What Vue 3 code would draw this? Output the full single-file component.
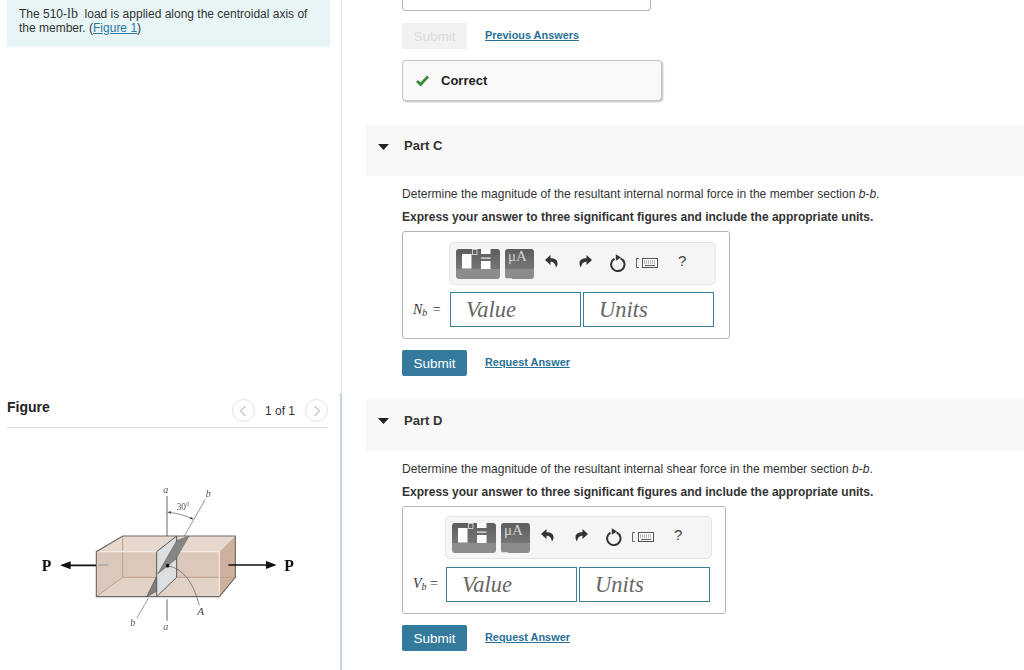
<script setup>
const parts = [
  { name: 'Part C', kind: 'normal', sym: 'N', variant: 'c' },
  { name: 'Part D', kind: 'shear', sym: 'V', variant: 'd' }
]
</script>

<template>
  <div class="page">
    <aside class="left">
      <div class="info">
        The 510-<span class="serif">lb</span>&nbsp; load is applied along the centroidal axis of the member. (<a class="fig-link">Figure 1</a>)
      </div>
      <div class="fig-head">
        <span class="fig-title">Figure</span>
        <div class="pager">
          <span class="circle"><svg width="8" height="12" viewBox="0 0 8 12"><path d="M6.500 1 1.500 6l5 5" fill="none" stroke="#c4c4c4" stroke-width="1.100"/></svg></span>
          <span class="count">1 of 1</span>
          <span class="circle"><svg width="8" height="12" viewBox="0 0 8 12"><path d="M1.500 1l5 5-5 5" fill="none" stroke="#c4c4c4" stroke-width="1.100"/></svg></span>
        </div>
      </div>
      <svg class="diagram" width="340" height="200" viewBox="0 0 1020 600">
        <path d="M501 78V206M501 388V452" stroke="#8c8c8c" stroke-width="4" fill="none"/>
        <path d="M616 88 552 200M445 385 410 445" stroke="#9a9a9a" stroke-width="3" fill="none"/>
        <path d="M503 127Q545 130 580 148" stroke="#555" stroke-width="2" fill="none"/>
        <path d="M503 127l10-4v8zM580 148l-11-1 4-7z" fill="#444"/>
        <path d="M289 245 368 198H706L658 245z" fill="#e6d8cc"/>
        <path d="M289 245H658V380H289z" fill="#dbc8ba"/>
        <path d="M658 245 706 198V322L658 380z" fill="#cdb19c"/>
        <path d="M289 380 368 322H658V380z" fill="#e3d3c7"/>
        <path d="M368 198V322M368 322H706M368 322 289 380" stroke="#bda28e" stroke-width="3" fill="none"/>
        <path d="M289 245H658M658 245V380" stroke="#f2ebe5" stroke-width="3.500" fill="none"/>
        <path d="M289 380V245L368 198H706V322L658 380H289z" stroke="#6f6a66" stroke-width="3.500" fill="none"/>
        <path d="M295 285H325" stroke="#a6a3a6" stroke-width="4"/>
        <path d="M470 318 440 380 470 364z" fill="#7d7d7d" stroke="#444" stroke-width="1.500"/>
        <path d="M470 245 530 198V322L470 380z" fill="#dcdee0" stroke="#55585a" stroke-width="3"/>
        <path d="M567 198 530 212 473 312 527 268z" fill="#858585" stroke="#555" stroke-width="1.500"/>
        <circle cx="503" cy="287" r="5.500" fill="#111"/>
        <path d="M506 288Q570 300 598 406" stroke="#555" stroke-width="2" fill="none"/>
        <path d="M288 286H205M685 285H805" stroke="#111" stroke-width="5" fill="none"/>
        <path d="M180 286 212 274V298zM830 285 798 273V297z" fill="#111"/>
        <text x="125" y="302" class="p">P</text>
        <text x="853" y="302" class="p">P</text>
        <text x="490" y="70" class="it">a</text>
        <text x="490" y="481" class="it">a</text>
        <text x="617" y="80" class="it">b</text>
        <text x="391" y="467" class="it">b</text>
        <text x="592" y="436" class="it big">A</text>
        <text x="530" y="121" class="deg">30°</text>
      </svg>
    </aside>

    <main class="right">
      <div class="prev-box"></div>
      <div class="actions first">
        <button class="submit disabled">Submit</button>
        <a class="link">Previous Answers</a>
      </div>
      <div class="correct">
        <svg width="13" height="11" viewBox="0 0 13 11"><path d="M1 6 4.600 9.500 12 1.500" fill="none" stroke="#3a8a3c" stroke-width="2.800"/></svg>
        <span>Correct</span>
      </div>

      <section v-for="p in parts" :key="p.name" class="part" :class="p.variant">
        <header class="band">
          <svg class="caret" width="11" height="6" viewBox="0 0 11 6"><path d="M0 0H11L5.500 6z" fill="#222"/></svg>
          <span>{{ p.name }}</span>
        </header>
        <p class="q">Determine the magnitude of the resultant internal {{ p.kind }} force in the member section <i>b</i>-<i>b</i>.</p>
        <p class="hint">Express your answer to three significant figures and include the appropriate units.</p>
        <div class="answer">
          <div class="toolbar">
            <span class="tbtn t1">
              <svg width="44" height="21" viewBox="0 0 44 21">
                <rect x="6" y="5" width="9.500" height="14.500" fill="#fff"/>
                <rect x="16.500" y=".5" width="4.500" height="5" fill="none" stroke="#ccc" stroke-width="1"/>
                <rect x="25" y="0" width="9.500" height="5" fill="#fff"/>
                <rect x="25" y="8.500" width="9.500" height="1.200" fill="#eee"/>
                <rect x="25" y="12" width="9.500" height="8" fill="#fff"/>
              </svg>
            </span>
            <span class="tbtn t2"><span class="mu">μA</span><i class="dash"></i></span>
            <svg class="ic undo" width="13" height="13" viewBox="0 0 13 13"><path d="M5.500 0 0 5l5.500 5V6.800c3 0 4.500 1.500 5.500 5.700.9-1 1.500-2.600 1.500-4.200C12.500 4.800 10 3.300 5.500 3.200z" fill="#333"/></svg>
            <svg class="ic redo" width="13" height="13" viewBox="0 0 13 13"><path d="M7.500 0 13 5l-5.500 5V6.800c-3 0-4.500 1.500-5.500 5.700-.9-1-1.500-2.600-1.500-4.200C.5 4.800 3 3.300 7.500 3.200z" fill="#333"/></svg>
            <svg class="ic reset" width="16" height="18" viewBox="0 0 16 18"><path d="M4.500 4.600a6.700 6.700 0 1 0 6 -.3" fill="none" stroke="#333" stroke-width="2"/><path d="M5.800 .3 11 3.600 5.800 6.800z" fill="#333"/></svg>
            <svg class="ic kbd" width="22" height="10" viewBox="0 0 22 10">
              <path d="M3 .5H.5v9H3" fill="none" stroke="#666"/>
              <rect x="6.500" y=".5" width="15" height="9" fill="#fff" stroke="#555"/>
              <path d="M8 3h12M8 5h12" stroke="#777" stroke-dasharray="1 1" stroke-width="1.200"/>
              <path d="M9 7.500h10" stroke="#666" stroke-width="1.200"/>
            </svg>
            <span class="help">?</span>
          </div>
          <label class="sym"><i>{{ p.sym }}<sub>b</sub></i> =</label>
          <div class="inputs">
            <span class="field">Value</span>
            <span class="field">Units</span>
          </div>
        </div>
        <div class="actions">
          <button class="submit">Submit</button>
          <a class="link">Request Answer</a>
        </div>
      </section>
    </main>
  </div>
</template>

<style>
html, body { margin: 0; background: #fff; }
</style>

<style scoped>
.page {
  display: grid;
  grid-template-columns: 342px 1fr;
  width: 1024px;
  height: 670px;
  overflow: hidden;
  font-family: "Liberation Sans", Arial, sans-serif;
  color: #2b2b2b;
}
.left {
  box-sizing: border-box;
  background:
    linear-gradient(#dde6ed, #dde6ed) right top / 1px 393px no-repeat,
    linear-gradient(#c2d4e3, #c2d4e3) right bottom / 2px 277px no-repeat;
}
.info {
  margin-left: 7px;
  width: 323px;
  height: 47px;
  box-sizing: border-box;
  padding: 7px 12px 0;
  background: #e7f5f6;
  font-size: 12px;
  line-height: 14px;
  color: #333;
}
.serif { font-family: "Liberation Serif", serif; font-size: 14px; line-height: 1; }
.fig-link { color: #2a7a9e; text-decoration: underline; }
.fig-head {
  margin: 351px 0 0 7px;
  width: 321px;
  height: 30px;
  box-sizing: border-box;
  border-bottom: 1px solid #dedede;
  display: flex;
  justify-content: space-between;
  padding-bottom: 5px;
  align-items: center;
}
.fig-title { font-size: 14px; line-height: 16px; font-weight: 700; color: #222; align-self: flex-start; margin-top: 1px; }
.pager { display: flex; align-items: center; gap: 10px; font-size: 12px; color: #333; margin-top: 1px; }
.circle {
  width: 23px; height: 23px; box-sizing: border-box;
  border: 1px solid #e2e2e2; border-radius: 50%;
  display: flex; align-items: center; justify-content: center;
}
.diagram { display: block; margin-top: 42px; filter: blur(0.6px); }
.p { font: 700 47px "Liberation Serif", serif; fill: #111; }
.it { font: italic 30px "Liberation Serif", serif; fill: #555; }
.big { font-size: 34px; fill: #444; }
.deg { font: 28px "Liberation Serif", serif; fill: #555; }

.right { padding-left: 60px; position: relative; }
.prev-box {
  width: 249px; height: 11px; box-sizing: border-box;
  border: 1px solid #b4b4b4; border-top: 0;
  border-radius: 0 0 4px 4px;
}
.actions { display: flex; align-items: center; gap: 18px; margin-top: 11px; }
.actions.first { margin-top: 12px; }
.submit {
  width: 65px; height: 26px; padding: 0; border: 0; border-radius: 2px;
  background: #337a9d; color: #fff;
  font: 13.500px "Liberation Sans", Arial, sans-serif;
}
.submit.disabled { background: #f2f2f2; color: #dcdcdc; }
.link {
  color: #2a7096; font-size: 10.900px; font-weight: 700;
  text-decoration: underline;
  position: relative; top: -1px;
}
.correct {
  margin-top: 11px;
  width: 260px; height: 41px; box-sizing: border-box;
  border: 1px solid #c4c4c4; border-radius: 4px;
  background: #f9f9f9;
  box-shadow: 1px 1px 2px #bbb;
  display: flex; align-items: center; gap: 12px;
  padding-left: 13px;
  font-size: 13px; font-weight: 700; color: #222;
}
.part { margin-top: 24px; }
.part.d { margin-top: 23px; }
.band {
  margin-left: -36px;
  height: 51px; background: #f8f8f8;
  display: flex; align-items: center; gap: 15px;
  padding-left: 12px;
  font-size: 13px; font-weight: 700; color: #333;
  padding-bottom: 10px; box-sizing: border-box;
}
.d .band { height: 52px; }
.caret { position: relative; top: 1px; }
.q { margin: 10px 0 0; padding-top: 1px; font-size: 12.050px; line-height: 15px; color: #333; }
.hint { margin: 8px 0 0; font-size: 12.030px; line-height: 15px; font-weight: 700; color: #333; }
.answer {
  margin-top: 6px;
  display: inline-grid;
  grid-template-columns: auto auto;
  grid-template-areas: ". tools" "sym inputs";
  align-items: center;
  box-sizing: border-box;
  border: 1px solid #b4b4b4; border-radius: 3px;
  padding: 10px 13px 11px 10px;
}
.d .answer { padding-top: 9px; }
.toolbar {
  grid-area: tools;
  width: 267px; height: 43px; box-sizing: border-box;
  background: #f5f5f5; border: 1px solid #e4e4e4; border-radius: 5px;
  display: flex; align-items: center;
  padding-left: 6px;
  position: relative;
}
.tbtn {
  display: block; position: relative;
  height: 30px; border-radius: 3px; overflow: hidden;
  background: linear-gradient(#5d5d5d, #767676 66%, #8c8c8c 66%);
}
.t1 { width: 44px; }
.t1 svg { display: block; }
.t2 { width: 29px; margin-left: 5px; }
.mu { position: absolute; left: 3px; top: -1px; color: #d4d4d4; font: 15px "Liberation Serif", serif; }
.dash { position: absolute; left: 1px; bottom: 0; width: 6px; height: 1px; background: #ddd; }
.ic { display: block; }
.undo { margin-left: 11px; margin-top: -4px; }
.redo { margin-left: 21px; margin-top: -4px; }
.reset { margin-left: 18px; margin-top: -2px; }
.kbd { margin-left: 10px; margin-top: -1px; }
.help { margin-left: 20px; font-size: 15px; color: #444; margin-top: -6px; }
.sym {
  grid-area: sym;
  font: 14px "Liberation Serif", serif;
  color: #333;
  white-space: nowrap;
  margin-top: 7px;
}
.c .sym { width: 36px; word-spacing: 2px; }
.d .sym { width: 32px; }
.sym sub { font-size: 10px; line-height: 0; vertical-align: -2px; }
.inputs { grid-area: inputs; display: flex; gap: 2px; margin: 7px 0 0 1px; }
.d .inputs { margin-top: 8px; }
.field {
  width: 131px; height: 35px; box-sizing: border-box;
  border: 1px solid #3d7e9f;
  padding-left: 15px;
  font: italic 22.500px/33px "Liberation Serif", serif;
  color: #666;
}
</style>
